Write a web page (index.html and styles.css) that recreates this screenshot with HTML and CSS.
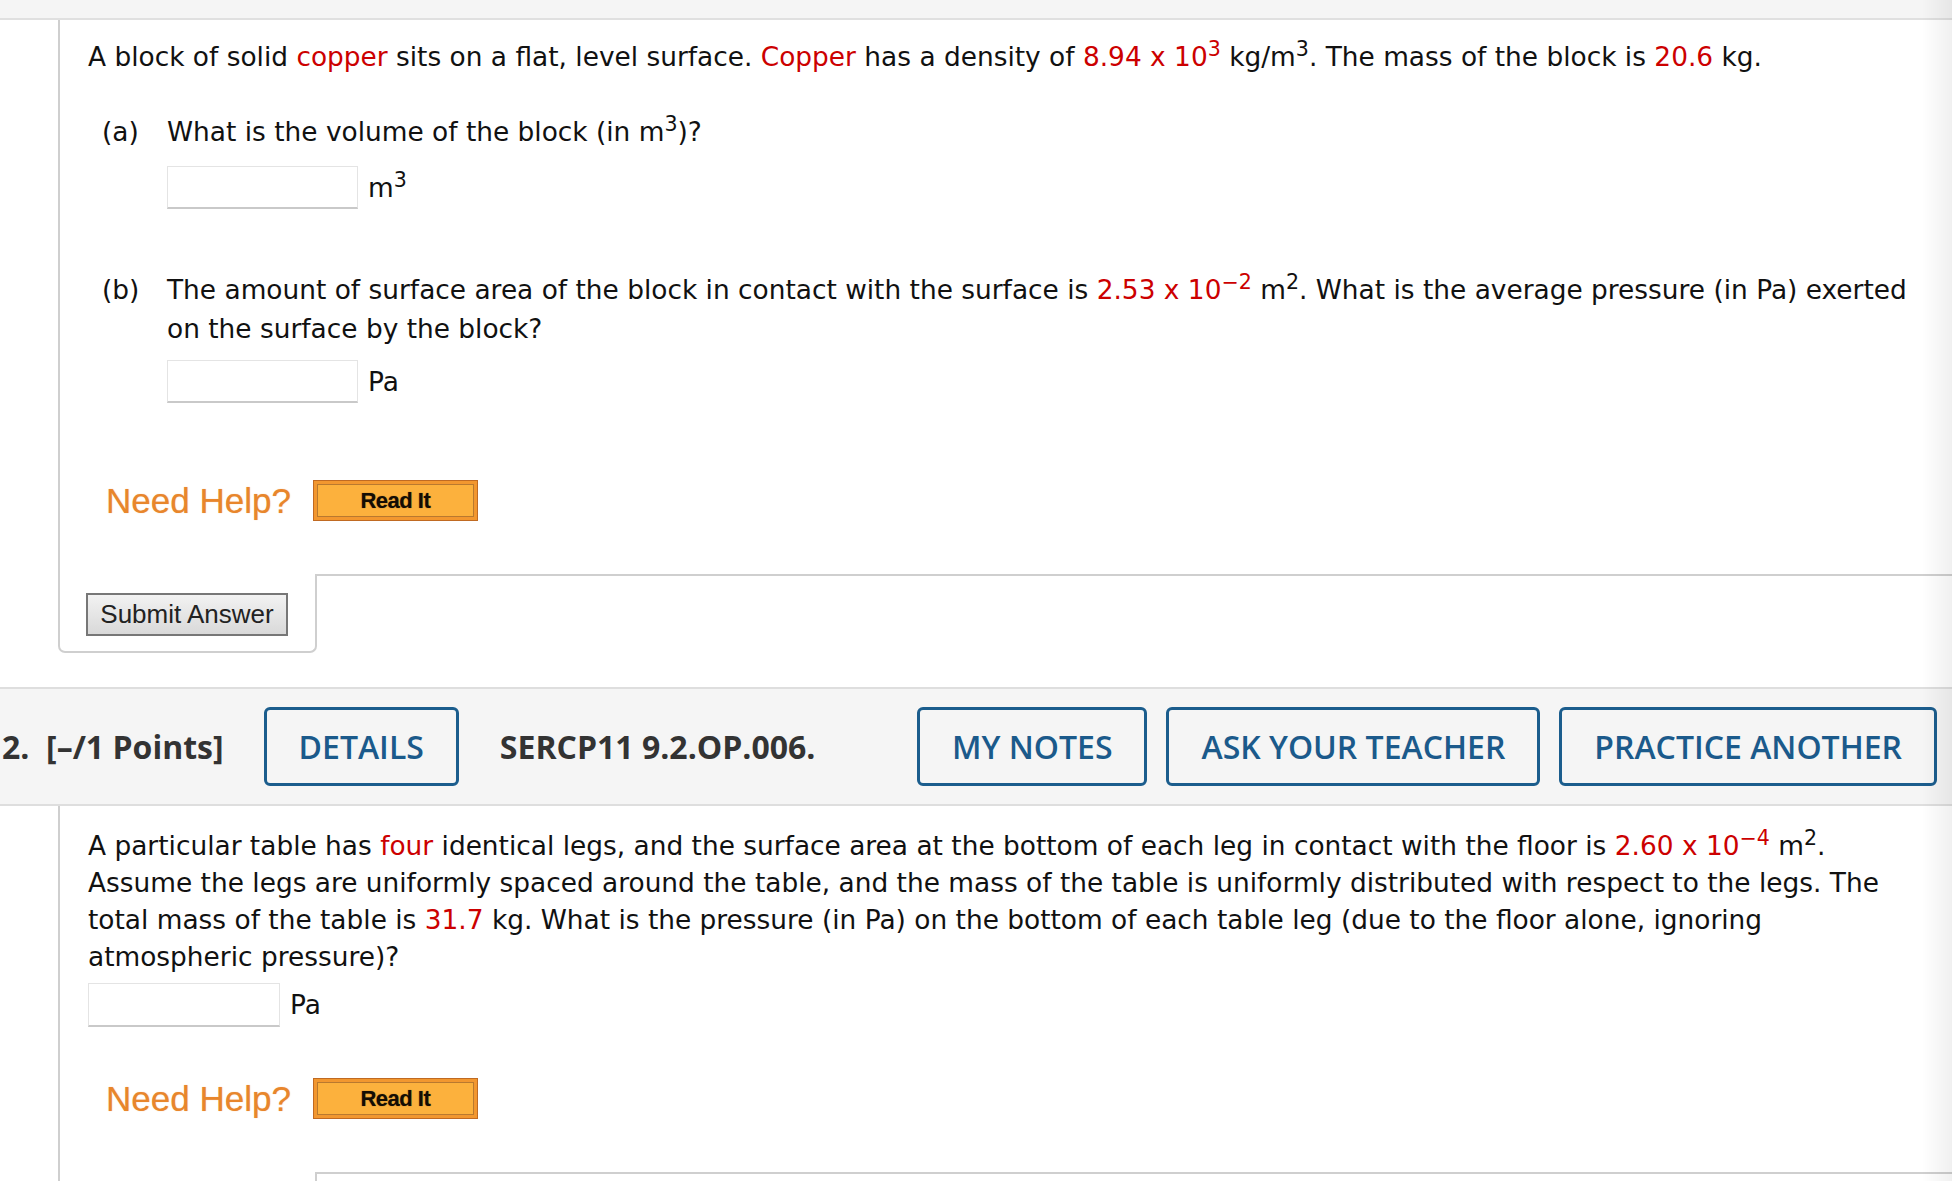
FILE: index.html
```html
<!DOCTYPE html>
<html lang="en">
<head>
<meta charset="utf-8">
<title>Question</title>
<link rel="stylesheet" href="styles.css">
</head>
<body>
<div class="page">
  <div class="topbar"></div>

  <div class="qcard">
    <div class="qcontent">
      <p class="stem">A block of solid <span class="red">copper</span> sits on a flat, level surface. <span class="red">Copper</span> has a density of <span class="red">8.94 x 10<sup>3</sup></span> kg/m<sup>3</sup>. The mass of the block is <span class="red">20.6</span> kg.</p>
      <div class="part part-a">
        <span class="plabel">(a)</span>
        <div class="pbody">
          <p class="ptext">What is the volume of the block (in m<sup>3</sup>)?</p>
          <div class="answer"><input class="ans" type="text"><span class="unit">m<sup>3</sup></span></div>
        </div>
      </div>
      <div class="part part-b">
        <span class="plabel">(b)</span>
        <div class="pbody">
          <p class="ptext">The amount of surface area of the block in contact with the surface is <span class="red">2.53 x 10<sup>&minus;2</sup></span> m<sup>2</sup>. What is the average pressure (in Pa) exerted on the surface by the block?</p>
          <div class="answer"><input class="ans" type="text"><span class="unit">Pa</span></div>
        </div>
      </div>
      <div class="help help-1"><span class="needhelp">Need Help?</span><button class="readit">Read It</button></div>
    </div>
    <div class="qfoot">
      <div class="submit-tab"><button class="submit">Submit Answer</button></div>
      <div class="foot-rest"></div>
    </div>
  </div>

  <div class="qheader">
    <span class="qnum">2.&nbsp; [&ndash;/1 Points]</span>
    <button class="hbtn details">DETAILS</button>
    <span class="qcode">SERCP11 9.2.OP.006.</span>
    <button class="hbtn notes">MY NOTES</button>
    <button class="hbtn">ASK YOUR TEACHER</button>
    <button class="hbtn">PRACTICE ANOTHER</button>
  </div>

  <div class="qcard q2">
    <div class="qcontent q2content">
      <p class="stem2">A particular table has <span class="red">four</span> identical legs, and the surface area at the bottom of each leg in contact with the floor is <span class="red">2.60 x 10<sup>&minus;4</sup></span> m<sup>2</sup>. Assume the legs are uniformly spaced around the table, and the mass of the table is uniformly distributed with respect to the legs. The total mass of the table is <span class="red">31.7</span> kg. What is the pressure (in Pa) on the bottom of each table leg (due to the floor alone, ignoring atmospheric pressure)?</p>
      <div class="answer answer-q2"><input class="ans" type="text"><span class="unit">Pa</span></div>
      <div class="help help-2"><span class="needhelp">Need Help?</span><button class="readit">Read It</button></div>
    </div>
    <div class="qfoot">
      <div class="submit-tab"><button class="submit">Submit Answer</button></div>
      <div class="foot-rest"></div>
    </div>
  </div>
</div>
<div class="edge-shade"></div>
</body>
</html>
```

FILE: styles.css
```css
html, body {
  margin: 0;
  padding: 0;
  background: #ffffff;
}

body {
  font-family: "DejaVu Sans", Verdana, sans-serif;
  font-size: 26.4px;
  color: #111111;
}

.page {
  width: 1952px;
}

.topbar {
  height: 18px;
  background: #f5f5f5;
  border-bottom: 2px solid #e0e0e0;
}

.red {
  color: #cc0000;
}

sup {
  font-size: 0.78em;
  line-height: 0;
  vertical-align: 0.5em;
}

p {
  margin: 0;
}

/* question card */
.qcard {
  margin-left: 58px;
}

.qcontent {
  border-left: 2px solid #cfcfcf;
  padding: 18px 40px 53px 28px;
  line-height: 37px;
}

.stem {
  margin-bottom: 38px;
}

.part {
  display: flex;
  padding-left: 14px;
}

.plabel {
  width: 65px;
  flex: none;
}

.pbody {
  flex: 1;
}

.part-a .answer {
  margin-top: 16px;
}

.part-b {
  margin-top: 61px;
  line-height: 39px;
}

.part-b .answer {
  margin-top: 12px;
}

.answer {
  display: flex;
  align-items: center;
}

.ans {
  width: 191px;
  height: 43px;
  box-sizing: border-box;
  margin: 0;
  border: 1px solid #e4e4e4;
  border-bottom: 2px solid #c9c9c9;
  background: #ffffff;
}

.answer-q2 .ans {
  width: 192px;
  height: 44px;
}

.unit {
  margin-left: 10px;
  line-height: 30px;
}

.help {
  display: flex;
  align-items: center;
  padding-left: 18px;
}

.help-1 {
  margin-top: 77px;
}

.needhelp {
  font-family: "Liberation Sans", Arial, sans-serif;
  font-size: 35px;
  color: #e8862c;
  line-height: 41px;
  text-shadow: 0 0 1px rgba(232, 134, 44, 0.6);
}

.readit {
  margin-left: 22px;
  width: 165px;
  height: 41px;
  box-sizing: border-box;
  border: 1px solid #c06a22;
  background: #fcb13d;
  box-shadow: inset 0 0 0 3px #f2972f, inset 0 0 0 4px #b9792f;
  font-family: "Liberation Sans", Arial, sans-serif;
  font-weight: bold;
  font-size: 22px;
  letter-spacing: -0.5px;
  color: #140d04;
  text-shadow: 0 0 1px rgba(20, 13, 4, 0.5);
  padding: 0;
}

.qfoot {
  display: flex;
}

.submit-tab {
  width: 259px;
  box-sizing: border-box;
  border-left: 2px solid #cfcfcf;
  border-right: 2px solid #cfcfcf;
  border-bottom: 2px solid #cfcfcf;
  border-radius: 0 0 7px 7px;
  padding: 19px 0 15px 26px;
}

.foot-rest {
  flex: 1;
  border-top: 2px solid #cfcfcf;
}

.submit {
  width: 202px;
  height: 43px;
  box-sizing: border-box;
  border: 2px solid #777777;
  background: linear-gradient(#f2f2f2, #d9d9d9);
  font-family: "Liberation Sans", Arial, sans-serif;
  font-size: 26px;
  color: #222222;
  padding: 0;
}

/* header band */
.qheader {
  margin-top: 34px;
  display: flex;
  align-items: center;
  background: #f5f5f5;
  border-top: 2px solid #dedede;
  border-bottom: 2px solid #dedede;
  padding: 18px 15px 18px 2px;
  font-family: "Open Sans", "DejaVu Sans", sans-serif;
  font-size: 32px;
  font-weight: 700;
  color: #333333;
}

.qnum {
  white-space: nowrap;
}

.qcode {
  margin-left: 41px;
  white-space: nowrap;
}

.hbtn {
  height: 79px;
  box-sizing: border-box;
  padding: 0 32px;
  border: 3px solid #1b5d8d;
  border-radius: 6px;
  background: transparent;
  font-family: "Open Sans", "DejaVu Sans", sans-serif;
  font-size: 32px;
  font-weight: 600;
  color: #1b5a8b;
  white-space: nowrap;
  margin-left: 19px;
}

.hbtn.details {
  margin-left: 40px;
}

.hbtn.notes {
  margin-left: auto;
}

/* question 2 */
.q2content {
  padding-top: 21px;
}

.answer-q2 {
  margin-top: 8px;
}

.help-2 {
  margin-top: 51px;
}

.edge-shade {
  position: fixed;
  top: 0;
  right: 0;
  width: 30px;
  height: 100%;
  background: linear-gradient(to right, rgba(0, 0, 0, 0), rgba(0, 0, 0, 0.06));
  pointer-events: none;
}
```
